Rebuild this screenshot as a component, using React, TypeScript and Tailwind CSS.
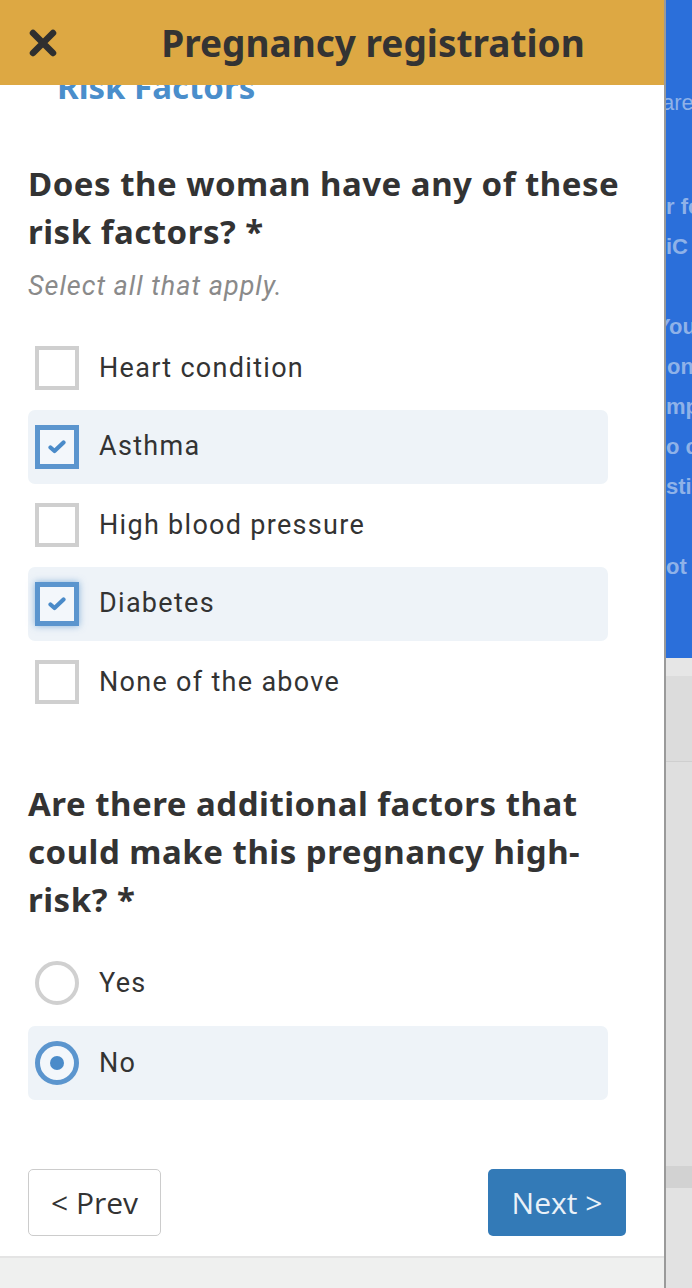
const RISKS = [
  { label: "Heart condition", checked: false },
  { label: "Asthma", checked: true },
  { label: "High blood pressure", checked: false },
  { label: "Diabetes", checked: true, focus: true },
  { label: "None of the above", checked: false },
];

const SIDE_LINES = [
  { top: 0, text: "r fo", x: 0 },
  { top: 0, text: " iC", x: 0 },
  { top: 40, text: "You", x: -10 },
  { top: 0, text: "ion", x: -5 },
  { top: 0, text: "mp", x: 0 },
  { top: 0, text: "o c", x: 0 },
  { top: 0, text: "stir", x: 0 },
  { top: 40, text: "ot t", x: 0 },
];

function Check() {
  return (
    <svg width="18" height="14" viewBox="0 0 18 14">
      <path d="M2.5 7.5 L6.5 11 L15.5 2.5" fill="none" stroke="#4a8bc9" strokeWidth="4.2" strokeLinecap="round" strokeLinejoin="round" />
    </svg>
  );
}

function Checkbox({ checked, focus }: { checked: boolean; focus?: boolean }) {
  if (!checked) {
    return <span className="h-[44px] w-[44px] shrink-0 border-[4px] border-[#cfcfcf] bg-white" />;
  }
  return (
    <span
      className={`flex h-[44px] w-[44px] shrink-0 items-center justify-center border-[5px] border-[#5b95ce] bg-[#f3f7fb] ${
        focus ? "shadow-[0_0_7px_rgba(91,149,206,0.7)]" : ""
      }`}
    >
      <Check />
    </span>
  );
}

function Radio({ checked }: { checked: boolean }) {
  if (!checked) {
    return <span className="h-[44px] w-[44px] shrink-0 rounded-full border-[4px] border-[#d0d0d0] bg-white" />;
  }
  return (
    <span className="flex h-[44px] w-[44px] shrink-0 items-center justify-center rounded-full border-[5px] border-[#5b95ce] bg-[#f3f7fb]">
      <span className="h-[14px] w-[14px] rounded-full bg-[#4a8bc9]" />
    </span>
  );
}

function Row({ active, children, label }: { active: boolean; children: React.ReactNode; label: string }) {
  return (
    <div
      className={`flex h-[74px] w-[580px] items-center gap-[20px] rounded-[7px] pl-[7px] ${
        active ? "bg-[#eef3f8]" : ""
      }`}
    >
      {children}
      <span className="font-['Roboto',sans-serif] text-[27px] tracking-[1.3px] text-[#333]">{label}</span>
    </div>
  );
}

export default function App() {
  return (
    <div className="flex h-[1288px] w-[692px] overflow-hidden bg-white">
      <div className="flex w-[664px] shrink-0 flex-col">
        <header className="relative z-10 flex h-[85px] shrink-0 items-center bg-[#dda843]">
          <div className="flex w-[84px] justify-center pl-[2px]">
            <svg width="30" height="28" viewBox="0 0 30 28">
              <path d="M5 4 L25 24 M25 4 L5 24" stroke="#2f2f2f" strokeWidth="6.5" strokeLinecap="round" />
            </svg>
          </div>
          <h1 className="flex-1 pr-[2px] text-center font-['Noto_Sans',sans-serif] text-[37px] font-bold text-[#333]">
            Pregnancy registration
          </h1>
        </header>

        <div className="flex flex-1 flex-col overflow-hidden">
          <div className="mt-[-18px] pl-[57px] font-['Noto_Sans',sans-serif] text-[33px] font-bold leading-[40px] text-[#4a8ecb]">
            Risk Factors
          </div>

          <div className="pl-[28px]">
            <h2 className="mt-[53px] w-[600px] font-['Noto_Sans',sans-serif] text-[33px] font-bold leading-[48px] tracking-[0.5px] text-[#333]">
              Does the woman have any of these risk factors? *
            </h2>
            <p className="mt-[16px] font-['Roboto',sans-serif] text-[27px] italic leading-[28px] tracking-[1px] text-[#8a8a8a]">
              Select all that apply.
            </p>

            <div className="mt-[31px] flex flex-col gap-[4.5px]">
              {RISKS.map((r) => (
                <Row key={r.label} active={r.checked} label={r.label}>
                  <Checkbox checked={r.checked} focus={r.focus} />
                </Row>
              ))}
            </div>

            <h2 className="mt-[61px] w-[590px] font-['Noto_Sans',sans-serif] text-[33px] font-bold leading-[48px] tracking-[0.5px] text-[#333]">
              Are there additional factors that could make this pregnancy high-risk? *
            </h2>

            <div className="mt-[22px] flex flex-col gap-[6px]">
              <Row active={false} label="Yes">
                <Radio checked={false} />
              </Row>
              <Row active={true} label="No">
                <Radio checked={true} />
              </Row>
            </div>
          </div>

          <div className="mt-auto flex items-center justify-between pb-[20px] pl-[28px] pr-[38px]">
            <button className="h-[67px] w-[133px] rounded-[5px] border border-[#cccccc] bg-white font-['Open_Sans',sans-serif] text-[30px] text-[#333]">
              &lt; Prev
            </button>
            <button className="h-[67px] w-[138px] rounded-[5px] bg-[#337ab7] font-['Open_Sans',sans-serif] text-[30px] text-[#eaf1f8]">
              Next &gt;
            </button>
          </div>
        </div>

        <div className="h-[32px] shrink-0 border-t-2 border-[#e4e4e4] bg-[#eff0ef]" />
      </div>

      <div className="flex w-[28px] shrink-0 flex-col border-l-2 border-[#9a9a9a]">
        <div className="h-[658px] overflow-hidden bg-[#2b6fda] font-['Liberation_Sans',sans-serif] text-[22px] font-bold leading-[40px] text-[#8fb2e8]">
          <div className="mt-[83px] ml-[-4px] whitespace-nowrap font-normal">are</div>
          <div className="mt-[64px]">
            {SIDE_LINES.map((l, i) => (
              <div key={i} className="whitespace-nowrap" style={{ marginTop: l.top, marginLeft: l.x }}>
                {l.text}
              </div>
            ))}
          </div>
        </div>
        <div className="flex flex-1 flex-col bg-[#dedede]">
          <div className="h-[18px] bg-[#e6e6e6]" />
          <div className="h-[86px] border-b border-[#cfcfcf] bg-[#dcdcdc]" />
          <div className="flex-1 bg-[#dfdfdf]" />
          <div className="h-[22px] bg-[#d2d2d2]" />
          <div className="h-[100px] bg-[#e2e2e2]" />
        </div>
      </div>
    </div>
  );
}
